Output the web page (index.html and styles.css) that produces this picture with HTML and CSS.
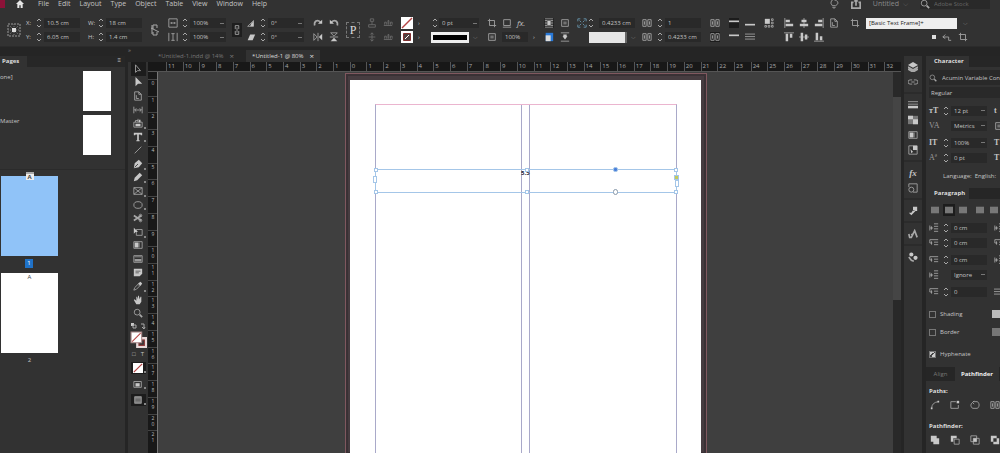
FILE: index.html
```html
<!DOCTYPE html>
<html lang="en">
<head>
<meta charset="utf-8">
<title>Untitled-1</title>
<link rel="stylesheet" href="styles.css">
</head>
<body>
<svg class="defs" aria-hidden="true">
<symbol id="ref" viewBox="0 0 16 16"><path d="M2 2h12v12H2z" fill="none" stroke="#999" stroke-dasharray="2 1"/><path d="M2 8h12M8 2v12M4 4l8 8M12 4l-8 8" stroke="#777" stroke-dasharray="1 1"/><path d="M6 6h4v4H6z" fill="#ddd"/></symbol>
<symbol id="step" viewBox="0 0 8 12"><path d="M2 4l2-2 2 2M2 8l2 2 2-2" class="s"/></symbol>
<symbol id="chain" viewBox="0 0 10 16"><path d="M3 7V3h4v4M3 9v4h4V9M5 5v6" class="s"/></symbol>
<symbol id="broken" viewBox="0 0 10 16"><path d="M3 7V3h4v3M3 10v3h4v-3M1 6l8 4M2 3v9" class="s"/></symbol>
<symbol id="sx" viewBox="0 0 12 12"><path d="M1 1h10v10H1zM3 6h6M4 5v2M8 5v2" class="s"/></symbol>
<symbol id="sy" viewBox="0 0 12 12"><path d="M1 1v10M11 1v10M6 2v8M4 2h4M4 10h4" class="s"/></symbol>
<symbol id="ang" viewBox="0 0 12 12"><path d="M2 10l7-7v7z" class="s"/><path d="M6 7l3-3v6H5z" class="f"/></symbol>
<symbol id="shear" viewBox="0 0 12 12"><path d="M2 10l3-7h6l-3 7z" class="f"/></symbol>
<symbol id="cw" viewBox="0 0 12 12"><path d="M2 9C1 4 5 1 9 5" class="s w"/><path d="M11 2v5H6z" class="f"/></symbol>
<symbol id="ccw" viewBox="0 0 12 12"><path d="M10 9C11 4 7 1 3 5" class="s w"/><path d="M1 2v5h5z" class="f"/></symbol>
<symbol id="fh" viewBox="0 0 12 12"><path d="M1 2v8l4-4zM6 1v10" class="s"/><path d="M11 2v8L7 6z" class="f"/></symbol>
<symbol id="fv" viewBox="0 0 12 12"><path d="M2 1h8L6 5zM1 6h10" class="s"/><path d="M2 11h8L6 7z" class="f"/></symbol>
<symbol id="up" viewBox="0 0 12 12"><path d="M4 1h4v3H4zM6 4v4M2 11V8h8v3z" class="s"/></symbol>
<symbol id="mv" viewBox="0 0 12 12"><path d="M6 1v10M2 6h8M4 3l2-2 2 2M4 9l2 2 2-2" class="s"/></symbol>
<symbol id="nodes" viewBox="0 0 12 12"><path d="M1 9h10M2 8V5h2v3M6 8V3h1v5M9 8V5h2v3" class="s"/></symbol>
<symbol id="none" viewBox="0 0 12 12"><path d="M0 0h12v12H0z" fill="#fff"/><path d="M1 11L11 1" stroke="#b54545" stroke-width="1.5"/></symbol>
<symbol id="noneS" viewBox="0 0 12 12"><path d="M0 0h12v12H0z" fill="#fff"/><path d="M2.500 2.500h7v7h-7z" fill="#504040" stroke="#803030"/><path d="M4 8l4-4" stroke="#fff"/></symbol>
<symbol id="corner" viewBox="0 0 12 12"><path d="M3 3h6v6H3zM1 3h2V1M9 11V9h2" class="s"/></symbol>
<symbol id="shadow" viewBox="0 0 12 12"><path d="M2 2h8v7H2zM1 11h10" class="s"/></symbol>
<symbol id="box" viewBox="0 0 12 12"><path d="M2 2h8v8H2zM4 5h4M4 7h4" class="s"/></symbol>
<symbol id="wrap" viewBox="0 0 12 12"><path d="M1 1h10M1 11h10M1 3h3M8 3h3M1 5h3M8 5h3M1 7h3M8 7h3M1 9h3M8 9h3" class="s"/><path d="M4 3h4v6H4z" class="f"/></symbol>
<symbol id="wrapb" viewBox="0 0 12 12"><path d="M2 1h9v10H2z" fill="#2979d8"/><path d="M2 4h6v7H2z" fill="#ddd"/></symbol>
<symbol id="jump" viewBox="0 0 12 12"><path d="M1 1h10M1 11h10" class="s"/><path d="M3 5h6L6 9zM4 3h4v2H4z" class="f"/></symbol>
<symbol id="fit" viewBox="0 0 12 12"><path d="M1 4V1h3M8 1h3v3M11 8v3H8M4 11H1V8M3 3l2 2M9 3L7 5M3 9l2-2M9 9L7 7" fill="none" stroke="#6c9db8"/></symbol>
<symbol id="cols" viewBox="0 0 12 12"><path d="M1 2h4v8H1zM7 2h4v8H7zM3 4v4M9 4v4" class="s"/></symbol>
<symbol id="bar" viewBox="0 0 12 12"><path d="M0 3h12v2H0z" class="f"/></symbol>
<symbol id="barlow" viewBox="0 0 12 12"><path d="M0 7h12v2H0z" class="f"/></symbol>
<symbol id="lines" viewBox="0 0 12 12"><path d="M0 2.500h12M0 5.500h12M0 8.500h12" class="s"/></symbol>
<symbol id="al" viewBox="0 0 12 12"><path d="M1 0v12" class="s"/><path d="M2 2h5v3H2zM2 7h9v3H2z" class="f"/></symbol>
<symbol id="ac" viewBox="0 0 12 12"><path d="M6 0v12" class="s"/><path d="M3 2h6v3H3zM1 7h10v3H1z" class="f"/></symbol>
<symbol id="ar" viewBox="0 0 12 12"><path d="M11 0v12" class="s"/><path d="M5 2h5v3H5zM1 7h9v3H1z" class="f"/></symbol>
<symbol id="at" viewBox="0 0 12 12"><path d="M0 1h12" class="s"/><path d="M2 2h3v9H2zM7 2h3v5H7z" class="f"/></symbol>
<symbol id="am" viewBox="0 0 12 12"><path d="M0 6h12" class="s"/><path d="M2 1h3v10H2zM7 3h3v6H7z" class="f"/></symbol>
<symbol id="ab" viewBox="0 0 12 12"><path d="M0 11h12" class="s"/><path d="M2 1h3v9H2zM7 5h3v5H7z" class="f"/></symbol>
<symbol id="page" viewBox="0 0 12 12"><path d="M2 1h5l3 3v7H2zM7 1v3h3M4 5v4h3" class="s"/></symbol>
<symbol id="grid" viewBox="0 0 12 12"><path d="M1 1h6v6H1z" class="f"/><path d="M9 1h2v2H9zM9 5h2v2H9zM1 9h2v2H1zM5 9h2v2H5zM9 9h2v2H9z" class="s"/></symbol>
<symbol id="undo" viewBox="0 0 12 12"><path d="M4 3L1 6l3 2M1 6h7v4h3" class="s"/></symbol>
<symbol id="sel" viewBox="0 0 12 12"><path d="M3 1v9l2.500-2H9z" class="s"/></symbol>
<symbol id="dir" viewBox="0 0 12 12"><path d="M3 0v11l3-3h5z" class="f"/></symbol>
<symbol id="gap" viewBox="0 0 12 12"><path d="M1 2v8M11 2v8M2 6h8M4 4L2 6l2 2M8 4l2 2-2 2" class="s"/></symbol>
<symbol id="coll" viewBox="0 0 12 12"><path d="M1 5h10v6H1zM3 5V3h3M6 1v4" class="s"/><path d="M3 7h6v3H3zM7 2h2v3H7z" class="f"/></symbol>
<symbol id="type" viewBox="0 0 12 12"><path d="M1 1h10v3H9.500L9 3H7v7h1v1H4v-1h1V3H3l-.5 1H1z" class="f"/></symbol>
<symbol id="line" viewBox="0 0 12 12"><path d="M2 10l8-8" class="s"/></symbol>
<symbol id="pen" viewBox="0 0 12 12"><path d="M1 11l1-6 5-4 4 4-4 5z" class="f"/><path d="M2 10l4-4" stroke="#333"/></symbol>
<symbol id="pencil" viewBox="0 0 12 12"><path d="M1 11l1-4 6-6 3 3-6 6z" class="f"/></symbol>
<symbol id="frame" viewBox="0 0 12 12"><path d="M1 2h10v8H1zM1 2l10 8M11 2L1 10" class="s"/></symbol>
<symbol id="oval" viewBox="0 0 12 12"><ellipse cx="6" cy="6" rx="5" ry="4" class="s"/></symbol>
<symbol id="cut" viewBox="0 0 12 12"><path d="M1 3l9 6M1 9l9-6" class="s w"/><circle cx="9" cy="3" r="1.500" class="s"/><circle cx="9" cy="9" r="1.500" class="s"/></symbol>
<symbol id="trans" viewBox="0 0 12 12"><path d="M4 3h7v7H4z" class="s"/><path d="M1 1v7l2-2h3z" class="f"/></symbol>
<symbol id="grad" viewBox="0 0 12 12"><path d="M1 2h10v8H1z" class="s"/><path d="M2 3h4v6H2z" class="f"/><path d="M6 3h2v6H6z" fill="#888"/></symbol>
<symbol id="feather" viewBox="0 0 12 12"><path d="M1 2h10v8H1z" class="s"/><path d="M2 3h8v1H2zM2 6h8v3H2z" class="f" opacity=".7"/></symbol>
<symbol id="note" viewBox="0 0 12 12"><path d="M1 2h10v6l-3 3H1z" class="f"/><path d="M3 5h6M3 7h4" stroke="#555"/></symbol>
<symbol id="drop" viewBox="0 0 12 12"><path d="M1 11l1-3 4-4 2 2-4 4z" class="s"/><path d="M6 3l3-2 2 2-2 3z" class="f"/></symbol>
<symbol id="hand" viewBox="0 0 12 12"><path d="M4 11L1 6l1-1 2 2V2h1l1 3V1h1l1 4 1-3h1v6l-2 3z" class="f"/></symbol>
<symbol id="zoom" viewBox="0 0 12 12"><circle cx="5" cy="5" r="3.500" class="s"/><path d="M8 8l3 3" class="s w"/></symbol>
<symbol id="fs" viewBox="0 0 16 16"><path d="M7 7h8v8H7z" fill="none" stroke="#e8d8d8" stroke-width="2.500"/><path d="M8.500 8.500h5v5h-5z" fill="#333" stroke="#913b3b"/><path d="M1 1h10v10H1z" fill="#fff" stroke="#a88"/><path d="M2 10l8-8" stroke="#b54545"/></symbol>
<symbol id="defsw" viewBox="0 0 16 8"><path d="M1 1h3v3H1z" class="f"/><path d="M3 3h3v3H3zM11 2h3v4M12 5l2 2 1-2" class="s"/></symbol>
<symbol id="screen" viewBox="0 0 12 12"><path d="M1 3h9v7H1z" class="s"/><path d="M3 5h5v4H3z" class="f"/></symbol>
<symbol id="normal" viewBox="0 0 12 12"><path d="M2 2h8v8H2z" fill="#888" stroke="#999"/><path d="M3 5h6M3 7h6" stroke="#555"/></symbol>
<symbol id="layers" viewBox="0 0 12 12"><path d="M6 0l6 3.500L6 7 0 3.500z" class="f"/><path d="M0 6l6 3.500L12 6M0 8.500L6 12l6-3.500" class="s w"/></symbol>
<symbol id="link" viewBox="0 0 12 12"><path d="M5 3.500H2.500a2.500 2.500 0 0 0 0 5H5M7 3.500h2.500a2.500 2.500 0 0 1 0 5H7M4 6h4" class="s"/></symbol>
<symbol id="stroke" viewBox="0 0 12 12"><path d="M0 2h12M0 5h12" class="s"/><path d="M0 7h12v3H0z" class="f"/></symbol>
<symbol id="swat" viewBox="0 0 12 12"><path d="M0 1h12v10H0z" fill="#777"/><path d="M0 1h6v4H0zM6 5h6v6H6z" class="f"/></symbol>
<symbol id="cc" viewBox="0 0 12 12"><path d="M1 1h10v10H1z" class="s"/><path d="M6 1h5v5H6zM3 5l3 3-2 2z" class="f"/></symbol>
<symbol id="obj" viewBox="0 0 12 12"><path d="M1 5V1h10v10H6" class="s"/><circle cx="4" cy="8" r="3" class="s"/></symbol>
<symbol id="pst" viewBox="0 0 12 12"><path d="M6 1h5v5H6zM1 8l3 3 5-5-3-1-2 3z" class="f"/></symbol>
<symbol id="gly" viewBox="0 0 12 12"><path d="M1 6l1 4h2l4-8 3 8M6 8l-2-2" class="s w"/></symbol>
<symbol id="balls" viewBox="0 0 12 12"><circle cx="4" cy="3" r="2.500" class="f"/><circle cx="9" cy="7" r="2.500" class="f"/><path d="M1 6l3 4 3 1" class="s w"/></symbol>
<symbol id="indent" viewBox="0 0 12 12"><path d="M6 1h5M6 4h5M6 7h5M6 10h5M1 6h4M3 4v4M1 3v6" class="s"/></symbol>
<symbol id="first" viewBox="0 0 12 12"><path d="M1 2h10M6 5h5M6 8h5M1 2v4h3M3 4v4" class="s"/></symbol>
<symbol id="para" viewBox="0 0 12 12"><path d="M0 1h12v10H0z" fill="#707070"/><path d="M0 3h12M0 6h12M0 9h12" stroke="#888"/></symbol>
<symbol id="curve" viewBox="0 0 12 12"><path d="M2 10q0-7 8-8" class="s"/><path d="M1 9h2v2H1zM9 1h2v2H9z" class="f"/></symbol>
<symbol id="open" viewBox="0 0 12 12"><path d="M7 2H1v8h9V6" class="s"/><path d="M8 1h3v3H8z" class="f"/></symbol>
<symbol id="close" viewBox="0 0 12 12"><path d="M4 2h5q4 4 0 8H3q-4-4 0-7M5 1L3 3l2 2" class="s"/></symbol>
<symbol id="add" viewBox="0 0 12 12"><path d="M1 1h7v3h3v7H4V8H1z" class="f"/></symbol>
<symbol id="sub" viewBox="0 0 12 12"><path d="M1 1h7v3H4v4H1z" class="f"/><path d="M5 5h6v6H5z" class="s"/></symbol>
<symbol id="inter" viewBox="0 0 12 12"><path d="M1 1h7v7H1zM4 4h7v7H4z" class="s"/><path d="M4 4h4v4H4z" class="f"/></symbol>
<symbol id="excl" viewBox="0 0 12 12"><path d="M1 1h7v3h3v7H4V8H1zM4 4v4h4V4z" fill-rule="evenodd" class="f"/></symbol>
<symbol id="home" viewBox="0 0 12 12"><path d="M6 0l6 6h-2v6H7V8H5v4H2V6H0z" fill="#e6e6e6"/></symbol>
<symbol id="bulb" viewBox="0 0 12 12"><path d="M4 8Q1 5 3 2t6 0 -1 6zM4 10h4M5 12h2" class="s"/></symbol>
<symbol id="share" viewBox="0 0 12 12"><path d="M3 4H1v7h10V4H9M6 8V1M4 3l2-2 2 2" class="s w"/></symbol>
</svg>

<header class="menubar">
  <span class="logo"></span>
  <button class="home" aria-label="Home"><svg><use href="#home"/></svg></button>
  <nav class="menus">
    <button>File</button><button>Edit</button><button>Layout</button><button>Type</button><button>Object</button><button>Table</button><button>View</button><button>Window</button><button>Help</button>
  </nav>
  <div class="menu-right">
    <button aria-label="Learn"><svg class="i"><use href="#bulb"/></svg></button>
    <button aria-label="Share"><svg class="i"><use href="#share"/></svg></button>
    <button class="workspace">Untitled <span>⌵</span></button>
    <label class="stock"><svg class="i"><use href="#zoom"/></svg><input placeholder="Adobe Stock" aria-label="Adobe Stock"></label>
  </div>
</header>

<section class="control" aria-label="Control">
  <svg class="ref"><use href="#ref"/></svg>
  <div class="g pos">
    <label for="x">X:</label><svg class="st"><use href="#step"/></svg><input id="x" value="10.5 cm">
    <label for="y">Y:</label><svg class="st"><use href="#step"/></svg><input id="y" value="6.05 cm">
  </div>
  <div class="g pos">
    <label for="w">W:</label><svg class="st"><use href="#step"/></svg><input id="w" value="18 cm">
    <label for="h">H:</label><svg class="st"><use href="#step"/></svg><input id="h" value="1.4 cm">
  </div>
  <svg class="tall"><use href="#broken"/></svg>
  <div class="g scale">
    <svg class="i"><use href="#sx"/></svg><svg class="st"><use href="#step"/></svg><select aria-label="Scale X"><option>100%</option></select>
    <svg class="i"><use href="#sy"/></svg><svg class="st"><use href="#step"/></svg><select aria-label="Scale Y"><option>100%</option></select>
  </div>
  <svg class="tall dark"><use href="#chain"/></svg>
  <div class="g scale">
    <svg class="i"><use href="#ang"/></svg><svg class="st"><use href="#step"/></svg><select aria-label="Rotation"><option>0°</option></select>
    <svg class="i"><use href="#shear"/></svg><svg class="st"><use href="#step"/></svg><select aria-label="Shear"><option>0°</option></select>
  </div>
  <div class="g two">
    <button aria-label="Rotate right"><svg class="i"><use href="#cw"/></svg></button><button aria-label="Rotate left"><svg class="i"><use href="#ccw"/></svg></button>
    <button aria-label="Flip horizontal"><svg class="i"><use href="#fh"/></svg></button><button aria-label="Flip vertical"><svg class="i"><use href="#fv"/></svg></button>
  </div>
  <span class="big-p">P</span>
  <div class="g two dim">
    <button aria-label="Select container"><svg class="i"><use href="#up"/></svg></button><button aria-label="Previous object"><svg class="i"><use href="#nodes"/></svg></button>
    <button aria-label="Select content"><svg class="i"><use href="#mv"/></svg></button><button aria-label="Next object"><svg class="i"><use href="#nodes"/></svg></button>
  </div>
  <div class="g fill">
    <button aria-label="Fill"><svg class="i"><use href="#none"/></svg></button><span>›</span>
    <button aria-label="Stroke"><svg class="i"><use href="#noneS"/></svg></button><span>›</span>
  </div>
  <div class="g weight">
    <div class="row"><svg class="st"><use href="#step"/></svg><select aria-label="Stroke weight"><option>0 pt</option></select></div>
    <div class="row"><button class="stroke-style" aria-label="Stroke style"></button><span class="caret">⌵</span></div>
  </div>
  <div class="g effects">
    <div class="row"><svg class="i"><use href="#corner"/></svg><svg class="i"><use href="#shadow"/></svg><em>fx.</em></div>
    <div class="row"><svg class="i"><use href="#box"/></svg><input value="100%" aria-label="Opacity"><span>›</span></div>
  </div>
  <div class="g two">
    <button class="on" aria-label="No text wrap"><svg class="i"><use href="#wrap"/></svg></button><button aria-label="Wrap bounding box"><svg class="i"><use href="#box"/></svg></button>
    <button aria-label="Wrap object shape"><svg class="i"><use href="#wrapb"/></svg></button><button aria-label="Jump object"><svg class="i"><use href="#jump"/></svg></button>
  </div>
  <div class="g corners">
    <div class="row"><svg class="i"><use href="#fit"/></svg><svg class="st"><use href="#step"/></svg><input value="0.4233 cm" aria-label="Corner size"></div>
    <div class="row end"><button class="corner-style" aria-label="Corner shape"></button><span class="caret">⌵</span></div>
  </div>
  <div class="g columns">
    <svg class="i"><use href="#cols"/></svg><svg class="st"><use href="#step"/></svg><input value="1" aria-label="Columns">
    <svg class="i"><use href="#cols"/></svg><svg class="st"><use href="#step"/></svg><input value="0.4233 cm" aria-label="Gutter">
  </div>
  <div class="g one"><svg class="i"><use href="#cols"/></svg><svg class="i on"><use href="#cols"/></svg></div>
  <div class="g two wide">
    <svg class="i on"><use href="#bar"/></svg><svg class="i"><use href="#barlow"/></svg>
    <svg class="i"><use href="#bar"/></svg><svg class="i"><use href="#lines"/></svg>
  </div>
  <div class="g one near"><svg class="i"><use href="#grid"/></svg></div>
  <div class="g four">
    <button aria-label="Align left"><svg class="i"><use href="#al"/></svg></button><button aria-label="Align center"><svg class="i"><use href="#ac"/></svg></button><button aria-label="Align right"><svg class="i"><use href="#ar"/></svg></button><button aria-label="Align to"><svg class="i"><use href="#page"/></svg></button>
    <button aria-label="Align top"><svg class="i"><use href="#at"/></svg></button><button aria-label="Align middle"><svg class="i"><use href="#am"/></svg></button><button aria-label="Align bottom"><svg class="i"><use href="#ab"/></svg></button>
  </div>
  <div class="g style">
    <div class="row"><svg class="i"><use href="#corner"/></svg><select class="object-style" aria-label="Object style"><option>[Basic Text Frame]+</option></select><span class="caret">⌵</span></div>
    <div class="row end"><span class="mini"></span><svg class="i"><use href="#undo"/></svg><svg class="i"><use href="#corner"/></svg></div>
  </div>
</section>

<main class="work">
  <aside class="pages">
    <h2>Pages</h2><span class="burger">≡</span>
    <div class="masters">
      <span>one]</span><i class="thumb"></i>
      <span>Master</span><i class="thumb"></i>
    </div>
    <div class="spreads">
      <div class="spread current"><b class="marker">A</b></div><span class="num picked">1</span>
      <div class="spread">A</div><span class="num">2</span>
    </div>
  </aside>

  <aside class="tools">
    <div class="grip">»</div>
    <div class="toolset">
      <button class="on" aria-label="Selection"><svg class="i"><use href="#sel"/></svg></button>
      <button aria-label="Direct selection"><svg class="i"><use href="#dir"/></svg></button>
      <button aria-label="Page"><svg class="i"><use href="#page"/></svg></button>
      <button aria-label="Gap"><svg class="i"><use href="#gap"/></svg></button>
      <button class="more" aria-label="Content collector"><svg class="i"><use href="#coll"/></svg></button>
      <button class="more" aria-label="Type"><svg class="i"><use href="#type"/></svg></button>
      <button aria-label="Line"><svg class="i"><use href="#line"/></svg></button>
      <button class="more" aria-label="Pen"><svg class="i"><use href="#pen"/></svg></button>
      <button class="more" aria-label="Pencil"><svg class="i"><use href="#pencil"/></svg></button>
      <button class="more" aria-label="Rectangle frame"><svg class="i"><use href="#frame"/></svg></button>
      <button class="more" aria-label="Ellipse"><svg class="i"><use href="#oval"/></svg></button>
      <button aria-label="Scissors"><svg class="i"><use href="#cut"/></svg></button>
      <button class="more" aria-label="Free transform"><svg class="i"><use href="#trans"/></svg></button>
      <button aria-label="Gradient swatch"><svg class="i"><use href="#grad"/></svg></button>
      <button aria-label="Gradient feather"><svg class="i"><use href="#feather"/></svg></button>
      <button aria-label="Note"><svg class="i"><use href="#note"/></svg></button>
      <button class="more" aria-label="Eyedropper"><svg class="i"><use href="#drop"/></svg></button>
      <button aria-label="Hand"><svg class="i"><use href="#hand"/></svg></button>
      <button aria-label="Zoom"><svg class="i"><use href="#zoom"/></svg></button>
    </div>
    <svg class="defsw"><use href="#defsw"/></svg>
    <svg class="fs"><use href="#fs"/></svg>
    <div class="fmt"><span>□</span><span>T</span></div>
    <button class="view on more" aria-label="Apply none"><svg class="i"><use href="#none"/></svg></button>
    <button class="view more" aria-label="View options"><svg class="i"><use href="#screen"/></svg></button>
    <button class="view on more" aria-label="Screen mode"><svg class="i"><use href="#normal"/></svg></button>
  </aside>

  <section class="editor">
    <div class="tabs">
      <button class="tab">*Untitled-1.indd @ 14% <span>×</span></button>
      <button class="tab active">*Untitled-1 @ 80% <span>×</span></button>
    </div>
    <div class="hruler"><span>11</span><span>10</span><span>9</span><span>8</span><span>7</span><span>6</span><span>5</span><span>4</span><span>3</span><span>2</span><span>1</span><span>0</span><span>1</span><span>2</span><span>3</span><span>4</span><span>5</span><span>6</span><span>7</span><span>8</span><span>9</span><span>10</span><span>11</span><span>12</span><span>13</span><span>14</span><span>15</span><span>16</span><span>17</span><span>18</span><span>19</span><span>20</span><span>21</span><span>22</span><span>23</span><span>24</span><span>25</span><span>26</span><span>27</span><span>28</span><span>29</span><span>30</span><span>31</span><span>32</span></div>
    <div class="stage">
      <div class="vruler"><span>0</span><span>1</span><span>2</span><span>3</span><span>4</span><span>5</span><span>6</span><span>7</span><span>8</span><span>9</span><span>10</span><span>11</span><span>12</span><span>13</span><span>14</span><span>15</span><span>16</span><span>17</span><span>18</span><span>19</span><span>20</span><span>21</span></div>
      <div class="canvas">
        <div class="bleed">
          <div class="sheet">
            <div class="margins"><i class="gutter"></i></div>
            <div class="frame">
              <span class="frame-text">5.5</span>
              <i class="h tl"></i><i class="h tr"></i><i class="h bl"></i><i class="h br"></i><i class="h tc"></i><i class="h bc"></i>
              <i class="port in"></i><i class="port out"></i><i class="h dot"></i><i class="h ring"></i><i class="h yellow"></i>
            </div>
          </div>
        </div>
      </div>
      <div class="scroll"><i></i></div>
    </div>
  </section>

  <aside class="dock">
    <button aria-label="Layers"><svg class="i"><use href="#layers"/></svg></button>
    <button aria-label="Links"><svg class="i"><use href="#link"/></svg></button>
    <hr>
    <button aria-label="Stroke"><svg class="i"><use href="#stroke"/></svg></button>
    <button aria-label="Swatches"><svg class="i"><use href="#swat"/></svg></button>
    <button aria-label="Gradient"><svg class="i"><use href="#grad"/></svg></button>
    <button aria-label="CC Libraries"><svg class="i"><use href="#cc"/></svg></button>
    <hr>
    <button class="fx" aria-label="Effects">fx</button>
    <button aria-label="Object styles"><svg class="i"><use href="#obj"/></svg></button>
    <hr>
    <button aria-label="Paragraph styles"><svg class="i"><use href="#pst"/></svg></button>
    <hr>
    <button aria-label="Glyphs"><svg class="i"><use href="#gly"/></svg></button>
    <hr>
    <button aria-label="Color themes"><svg class="i"><use href="#balls"/></svg></button>
  </aside>

  <aside class="props">
    <h2>Character</h2>
    <label class="font"><svg><use href="#zoom"/></svg><input value="Acumin Variable Concept" aria-label="Font family"></label>
    <input class="face" value="Regular" aria-label="Font style">
    <div class="p"><span class="glyph">тT</span><svg class="st"><use href="#step"/></svg><select aria-label="Font size"><option>12 pt</option></select><span class="glyph">t</span></div>
    <div class="p"><span class="glyph thin">VA</span><i></i><select aria-label="Kerning"><option>Metrics</option></select><svg class="i"><use href="#box"/></svg></div>
    <div class="p gap"><span class="glyph">IT</span><svg class="st"><use href="#step"/></svg><select aria-label="Vertical scale"><option>100%</option></select><span class="glyph">T</span></div>
    <div class="p"><span class="glyph thin">Aª</span><svg class="st"><use href="#step"/></svg><input value="0 pt" aria-label="Baseline shift"><span class="glyph">T</span></div>
    <div class="lang"><span>Language:</span><span>English:</span></div>
    <h2>Paragraph</h2>
    <div class="aligns">
      <button aria-label="Left"><svg><use href="#para"/></svg></button><button class="on" aria-label="Center"><svg><use href="#para"/></svg></button><button aria-label="Right"><svg><use href="#para"/></svg></button><button class="sp" aria-label="Justify left"><svg><use href="#para"/></svg></button><button aria-label="Justify center"><svg><use href="#para"/></svg></button>
    </div>
    <div class="p"><svg class="i"><use href="#indent"/></svg><svg class="st"><use href="#step"/></svg><input value="0 cm" aria-label="Left indent"><svg class="i"><use href="#indent"/></svg></div>
    <div class="p"><svg class="i"><use href="#first"/></svg><svg class="st"><use href="#step"/></svg><input value="0 cm" aria-label="First line indent"><svg class="i"><use href="#first"/></svg></div>
    <div class="p gap"><svg class="i"><use href="#first"/></svg><svg class="st"><use href="#step"/></svg><input value="0 cm" aria-label="Space before"><svg class="i"><use href="#indent"/></svg></div>
    <div class="p"><svg class="i"><use href="#indent"/></svg><i></i><select aria-label="Paragraph spacing"><option>Ignore</option></select></div>
    <div class="p gap"><svg class="i"><use href="#first"/></svg><svg class="st"><use href="#step"/></svg><input value="0" aria-label="Drop cap lines"><svg class="i"><use href="#lines"/></svg></div>
    <label class="check"><input type="checkbox"> Shading <i class="swatch"></i></label>
    <label class="check"><input type="checkbox"> Border <i class="swatch dim"></i></label>
    <label class="check hyphen"><input type="checkbox" checked> Hyphenate</label>
    <div class="ptabs"><button>Align</button><button class="active">Pathfinder</button></div>
    <h3>Paths:</h3>
    <div class="ops"><button aria-label="Join"><svg class="i"><use href="#curve"/></svg></button><button aria-label="Open"><svg class="i"><use href="#open"/></svg></button><button aria-label="Close"><svg class="i"><use href="#close"/></svg></button><button aria-label="Reverse"><svg class="i"><use href="#cols"/></svg></button></div>
    <h3>Pathfinder:</h3>
    <div class="ops"><button aria-label="Add"><svg class="i"><use href="#add"/></svg></button><button aria-label="Subtract"><svg class="i"><use href="#sub"/></svg></button><button aria-label="Intersect"><svg class="i"><use href="#inter"/></svg></button><button aria-label="Exclude"><svg class="i"><use href="#excl"/></svg></button></div>
  </aside>
</main>
</body>
</html>
```
FILE: styles.css
```css
* { box-sizing: border-box; }
body {
  margin: 0;
  height: 100vh;
  display: flex;
  flex-direction: column;
  overflow: hidden;
  background: #252525;
  color: #c4c4c4;
  font: 6px/8px "Open Sans", "Noto Sans", sans-serif;
}
button, input, select {
  margin: 0;
  padding: 0;
  border: 0;
  border-radius: 0;
  background: none;
  color: inherit;
  font: inherit;
  min-width: 0;
}
button { display: flex; align-items: center; justify-content: center; }
h2, h3 { margin: 0; font-size: 6px; line-height: 11px; color: #dedede; }
svg { display: block; flex: none; }
.defs { position: absolute; width: 0; height: 0; }
.s { fill: none; stroke: #a8a8a8; stroke-width: 1; }
.w { stroke-width: 2; }
.f { fill: #c8c8c8; }
.i { width: 10px; height: 10px; }
.st { width: 8px; height: 12px; }
.on { background: #1c1c1c; }

/* Menu bar */
.menubar {
  display: flex;
  align-items: center;
  flex: none;
  height: 14px;
  padding-bottom: 6px;
  background: #323232;
}
.logo { width: 5px; height: 8px; background: #8c1238; }
.home { margin-left: 10px; }
.home svg { width: 10px; height: 8px; }
.menus { display: flex; gap: 9px; margin-left: 13px; font-size: 7px; }
.menu-right { display: flex; align-items: center; gap: 12px; margin-left: auto; padding-right: 10px; }
.workspace { gap: 4px; color: #8a8a8a; font-size: 7px; }
.stock { display: flex; align-items: center; gap: 4px; width: 70px; background: #292929; color: #777; }
.stock input { flex: 1; width: 0; }
.stock input::placeholder { color: #666; }

/* Control bar */
.control {
  display: flex;
  align-items: center;
  flex: none;
  height: 33px;
  padding: 0 32px 0 6px;
  background: #323232;
  border-bottom: 1px solid #2b2b2b;
}
.ref { width: 16px; height: 16px; margin-right: 4px; }
.g { display: grid; grid-auto-rows: 14px; align-items: center; flex: none; }
.g input, .g select, .p input, .p select { width: 100%; height: 10px; padding-left: 3px; background: #292929; }
select { appearance: none; }
.g select, .p select {
  background: linear-gradient(#777, #777) right 2px center / 4px 1px no-repeat #292929;
}
.row { display: flex; align-items: center; }
.pos { grid-template-columns: 9px 9px 36px; margin-right: 8px; }
.tall { width: 10px; height: 16px; margin: 0 8px 0 0; }
.tall.dark { background: #1e1e1e; height: 14px; margin: 0 4px 0 6px; }
.scale { grid-template-columns: 13px 9px 36px; }
.two { grid-template-columns: 16px 16px; margin-left: 6px; justify-items: center; }
.big-p {
  flex: none;
  margin: 0 4px;
  width: 14px;
  border: 1px dashed #777;
  text-align: center;
  font: 12px/14px "Liberation Serif", serif;
  color: #ddd;
}
.dim { opacity: .5; margin-left: 0; }
.fill { grid-template-columns: 14px 10px; justify-items: center; margin-left: 4px; }
.fill .i { width: 12px; height: 12px; }
.weight { width: 48px; margin-left: 7px; }
.stroke-style { width: 38px; height: 11px; background: #000; border: solid #eee; border-width: 3px 2px; }
.caret { margin-left: 4px; color: #888; }
.effects { width: 48px; margin-left: 8px; }
.effects .row { gap: 5px; }
.effects input { width: 26px; }
.effects em { font-size: 8px; }
.corners { width: 59px; margin-left: 4px; }
.corners input { width: 36px; margin-left: 4px; }
.corner-style { width: 38px; height: 11px; background: #e6e6e6; border-right: 2px solid #666; }
.end { justify-content: flex-end; }
.columns { grid-template-columns: 14px 9px 36px; margin-left: 6px; }
.one { margin-left: 9px; align-content: start; height: 28px; }
.wide { margin-left: 6px; }
.near { margin-left: 6px; }
.four { grid-template-columns: repeat(4, 15px); justify-items: center; margin-left: 7px; }
.style { margin-left: auto; }
.style .row { gap: 6px; }
.style .caret { margin-left: 0; }
.g .object-style { width: 91px; height: 11px; background: #eee; color: #222; }
.mini { width: 4px; height: 4px; background: #ddd; }

/* Work area */
.work {
  flex: 1;
  min-height: 0;
  display: grid;
  grid-template-columns: 125px 23px minmax(0, 1fr) 23px 76px;
  grid-template-rows: minmax(0, 1fr);
}
.pages {
  display: grid;
  grid-template-columns: 27px 1fr;
  grid-template-rows: 11px auto 1fr;
  margin-top: 9px;
  background: #323232;
}
.pages h2 { padding-left: 2px; }
.burger { background: #272727; text-align: right; padding-right: 4px; }
.masters {
  grid-column: 1 / -1;
  display: grid;
  grid-template-columns: 83px 28px;
  row-gap: 4px;
  padding: 4px 0 14px;
  border-bottom: 1px solid #2b2b2b;
}
.masters span { padding-top: 2px; }
.thumb { height: 40px; background: #fff; }
.spreads { grid-column: 1 / -1; display: flex; flex-direction: column; align-items: flex-start; padding: 6px 0 0 1px; }
.spread { width: 57px; height: 80px; background: #fff; color: #444; text-align: center; }
.current { background: #90c3f8; }
.marker { display: block; width: 8px; margin: -4px auto 0; border-top: 2px solid #aaa; background: #eee; line-height: 6px; }
.num { width: 57px; height: 15px; padding-top: 3px; text-align: center; }
.picked { width: 8px; height: 9px; margin: 3px 0 5px 24px; padding: 0; background: #1f72c8; color: #fff; }

.tools { display: flex; flex-direction: column; align-items: center; margin-left: 3px; background: #323232; }
.grip { align-self: stretch; height: 15px; padding-top: 1px; background: #252525; color: #888; line-height: 4px; }
.toolset { display: grid; grid-auto-rows: 1fr; height: 258px; }
.tools button { width: 15px; }
.more { position: relative; }
.more::after { content: ""; position: absolute; right: 0; bottom: 1px; width: 2px; height: 2px; background: #888; }
.defsw { width: 16px; height: 8px; margin-top: 2px; }
.fs { width: 17px; height: 17px; margin-top: 1px; }
.fmt { display: flex; gap: 5px; margin: 2px 0 4px; }
.view { height: 12px; margin-bottom: 4px; }

.editor { display: flex; flex-direction: column; min-width: 0; }
.tabs { display: flex; flex: none; height: 15px; padding: 3px 0 0 4px; }
.tab { gap: 6px; height: 12px; padding: 0 6px; color: #777; }
.tab.active { margin-left: 6px; background: #323232; color: #ddd; }
.tab span { font-size: 8px; }
.hruler {
  flex: none;
  display: grid;
  grid-template-columns: repeat(44, minmax(0, 1fr));
  height: 10px;
  padding-left: 18px;
  background: #181818;
  border-bottom: 1px solid #555;
}
.hruler span { border-left: 1px solid #555; padding-left: 1px; line-height: 9px; color: #aaa; }
.stage { flex: 1; min-height: 0; display: grid; grid-template-columns: 10px minmax(0, 1fr) 8px; }
.vruler {
  display: grid;
  grid-template-rows: repeat(22, minmax(0, 1fr));
  padding: 7px 0 6px;
  background: #181818;
  border-right: 1px solid #777;
}
.vruler span {
  width: 9px;
  border-top: 1px solid #444;
  writing-mode: vertical-lr;
  text-orientation: upright;
  font-size: 5px;
  line-height: 9px;
  color: #bbb;
}
.canvas { position: relative; overflow: hidden; background: #3f3f3f; }
.bleed { position: absolute; left: 187px; top: 1px; width: 362px; bottom: -2px; border: 1px solid #80585f; background: #463c40; box-shadow: inset 0 0 0 2px #3a3135; }
.sheet { position: absolute; left: 4px; right: 5px; top: 6px; bottom: 0; background: #fff; }
.margins { position: absolute; left: 25px; right: 24px; top: 24px; bottom: -1px; border: 1px solid #a9a9c9; border-top-color: #ebb5cf; }
.gutter { position: absolute; left: 145px; width: 9px; top: 0; bottom: 0; border: solid #a9a9c9; border-width: 0 1px; }
.frame { position: absolute; left: 25px; right: 24px; top: 89px; height: 24px; border: 1px solid #a4c6e8; }
.frame-text { position: absolute; left: 145px; top: -1px; color: #223; font-weight: bold; }
.h, .port { position: absolute; width: 4px; height: 4px; background: #fff; border: 1px solid #a4c6e8; }
.tl { left: -2px; top: -2px; }
.tr { right: -2px; top: -2px; }
.bl { left: -2px; bottom: -2px; }
.br { right: -2px; bottom: -2px; }
.tc { left: 149px; top: -2px; }
.bc { left: 149px; bottom: -2px; }
.port { height: 7px; top: 6px; }
.in { left: -3px; }
.out { right: -3px; top: 10px; }
.dot { left: 237px; top: -3px; width: 5px; height: 5px; background: #477ddc; border-radius: 2px; }
.ring { left: 237px; bottom: -3px; width: 5px; height: 6px; border-color: #89a; border-radius: 3px; }
.yellow { right: -3px; top: 5px; width: 5px; height: 5px; background: #c3ca5a; }
.scroll { background: #292929; padding-top: 25px; }
.scroll i { display: block; height: 57%; background: #454545; }

.dock { display: flex; flex-direction: column; align-items: center; margin: 9px 2px 0 3px; padding-top: 3px; background: #323232; }
.dock button { width: 18px; height: 15px; }
.dock hr { width: 18px; margin: 3px 0; border: 0; border-top: 2px solid #2b2b2b; }
.dock .fx { font: italic bold 9px/10px "Liberation Serif", serif; }

/* Character, Paragraph and Pathfinder */
.props { margin: 9px 0 0 2px; padding-left: 3px; background: #323232; overflow: hidden; }
.props h2 { padding-left: 5px; background: linear-gradient(90deg, #323232 40px, #262626 40px); }
.font { display: flex; align-items: center; height: 15px; margin-top: 3px; gap: 5px; background: #292929; }
.font svg { width: 8px; height: 8px; }
.font input { flex: 1; width: 60px; }
.face { display: block; width: 100%; height: 11px; margin: 2px 0 5px; padding-left: 2px; background: #292929; }
.p { display: grid; grid-template-columns: 13px 9px 36px 8px; grid-auto-rows: 15px; align-items: center; column-gap: 0; }
.p > :last-child:not(select) { margin-left: 7px; }
.gap { margin-top: 2px; }
.glyph { font: bold 8px/10px "Liberation Serif", serif; white-space: nowrap; }
.thin { font-weight: normal; color: #999; }
.lang { display: flex; gap: 3px; margin: 7px 0 8px 14px; white-space: nowrap; }
.aligns { display: flex; gap: 2px; padding: 5px 0 4px 0; }
.aligns button { width: 12px; height: 12px; }
.aligns svg { width: 8px; height: 8px; }
.aligns .sp { margin-left: 3px; }
.check { display: flex; align-items: center; gap: 4px; height: 14px; margin: 8px 0 4px; }
.check + .check { margin-top: 4px; }
.check.hyphen { margin-top: 8px; }
.check input { appearance: none; width: 7px; height: 7px; border: 1px solid #777; }
.check input:checked { background: linear-gradient(135deg, #ccc 40%, #444 40% 60%, #ccc 60%); }
.swatch { width: 8px; height: 8px; margin-left: auto; background: #bbb; }
.ptabs { display: flex; height: 14px; margin: 6px 0 5px -3px; background: #262626; }
.ptabs button { width: 29px; color: #777; }
.ptabs .active { width: 44px; background: #323232; color: #eee; font-weight: bold; }
.props h3 { line-height: 10px; }
.ops { display: flex; gap: 10px; padding: 4px 0 11px 1px; }
.ops button { flex: none; width: 10px; height: 10px; }
```
